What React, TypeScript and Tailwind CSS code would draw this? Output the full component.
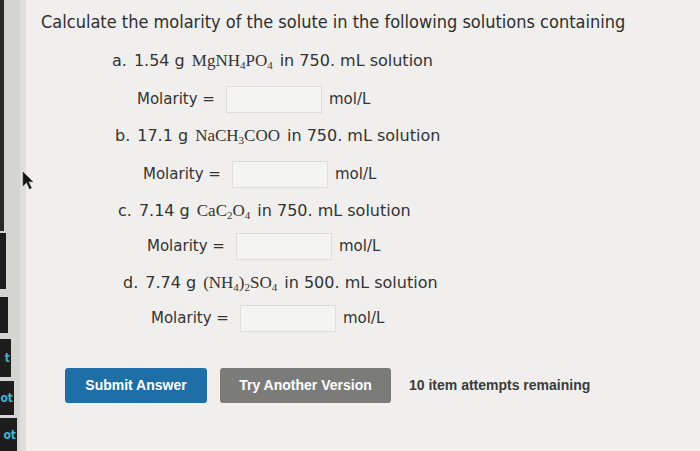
import React from "react";

const SANS = { fontFamily: '"DejaVu Sans Condensed", "DejaVu Sans", Verdana, sans-serif' };
const WIDE = { fontFamily: '"DejaVu Sans", Verdana, sans-serif' };

type Part = { base: string; sub?: string };

const ITEMS: {
  letter: string;
  mass: string;
  formula: Part[];
  volume: string;
  indent: string;
  molIndent: string;
  molGap: string;
}[] = [
  {
    letter: "a.",
    mass: "1.54 g",
    formula: [{ base: "MgNH", sub: "4" }, { base: "PO", sub: "4" }],
    volume: "750.",
    indent: "pl-[71px]",
    molIndent: "pl-[96px]",
    molGap: "mt-[12px]",
  },
  {
    letter: "b.",
    mass: "17.1 g",
    formula: [{ base: "NaCH", sub: "3" }, { base: "COO" }],
    volume: "750.",
    indent: "pl-[74px]",
    molIndent: "pl-[102px]",
    molGap: "mt-[12px]",
  },
  {
    letter: "c.",
    mass: "7.14 g",
    formula: [{ base: "CaC", sub: "2" }, { base: "O", sub: "4" }],
    volume: "750.",
    indent: "pl-[77px]",
    molIndent: "pl-[106px]",
    molGap: "mt-[9px]",
  },
  {
    letter: "d.",
    mass: "7.74 g",
    formula: [{ base: "(NH", sub: "4" }, { base: ")", sub: "2" }, { base: "SO", sub: "4" }],
    volume: "500.",
    indent: "pl-[82px]",
    molIndent: "pl-[110px]",
    molGap: "mt-[9px]",
  },
];

function Formula({ parts }: { parts: Part[] }) {
  return (
    <span className="text-[17px]" style={{ fontFamily: '"Liberation Serif", "Times New Roman", serif' }}>
      {parts.map((p, i) => (
        <span key={i}>
          {p.base}
          {p.sub && <sub className="relative top-[3px] align-baseline text-[11px]">{p.sub}</sub>}
        </span>
      ))}
    </span>
  );
}

function Cursor() {
  return (
    <svg className="absolute left-[22px] top-[171px]" width="12" height="19" viewBox="0 0 12 19">
      <path d="M1 1 L1 15 L4.5 11.5 L7.5 18 L9.5 17 L6.5 10.8 L11 10.8 Z" fill="#111" stroke="#555" strokeWidth="0.6" />
    </svg>
  );
}

export default function App() {
  return (
    <div className="relative flex h-[451px] w-[700px] overflow-hidden bg-[#f0efed] text-[#333]" style={SANS}>
      {/* side nav edge from the page behind */}
      <div className="flex w-[20px] flex-col bg-[#d4d4d2]">
        <div className="h-[232px] w-[4px] bg-[#2a2a2a]" />
        <div className="mt-[2px] h-[56px] w-[6px] bg-[#1d1d1d]" />
        <div className="mt-[8px] h-[36px] w-[8px] bg-[#1d1d1d]" />
        <div className="mt-[6px] flex h-[38px] w-[11px] items-center justify-end bg-[#1d1d1d] pr-[1px] text-[12px] font-bold text-[#3bb4d4]">
          t
        </div>
        <div className="mt-[4px] flex h-[34px] w-[14px] items-center justify-end bg-[#1d1d1d] pr-[1px] text-[12px] font-bold text-[#3bb4d4]">
          ot
        </div>
        <div className="mt-[3px] flex h-[33px] w-[17px] items-center justify-end bg-[#1d1d1d] pr-[1px] text-[12px] font-bold text-[#3bb4d4]">
          ot
        </div>
      </div>
      <div className="w-[6px] bg-[#dededc]" />

      <main className="flex-1 pl-[15px] pt-[10px]">
        <h1 className="text-[18px] leading-[24px] text-[#2e2e2e]">
          Calculate the molarity of the solute in the following solutions containing
        </h1>

        <div className="mt-[14px] flex flex-col" style={WIDE}>
          {ITEMS.map((it) => (
            <div key={it.letter} className="flex flex-col">
              <div className={`${it.indent} flex h-[26px] items-center gap-[7px] text-[16px]`}>
                <span>{it.letter}</span>
                <span>{it.mass}</span>
                <Formula parts={it.formula} />
                <span>in {it.volume} mL solution</span>
              </div>
              <div className={`${it.molIndent} ${it.molGap} mb-[10px] flex h-[27px] items-center text-[15px]`}>
                <span className="w-[89px]">Molarity =</span>
                <div className="h-[27px] w-[96px] border border-[#dcdcda] bg-[#f4f4f2]" />
                <span className="ml-[7px]">mol/L</span>
              </div>
            </div>
          ))}
        </div>

        <div
          className="mt-[26px] flex items-center pl-[24px]"
          style={{ fontFamily: '"Liberation Sans", Arial, sans-serif' }}
        >
          <button className="h-[35px] w-[142px] rounded-[3px] bg-[#1e6ea7] text-[14px] font-bold text-white">
            Submit Answer
          </button>
          <button className="ml-[13px] h-[35px] w-[171px] rounded-[3px] bg-[#7b7b7a] text-[14px] font-bold text-white">
            Try Another Version
          </button>
          <span className="ml-[18px] text-[14px] font-bold text-[#3a3a3a]">10 item attempts remaining</span>
        </div>
      </main>

      <Cursor />
    </div>
  );
}
